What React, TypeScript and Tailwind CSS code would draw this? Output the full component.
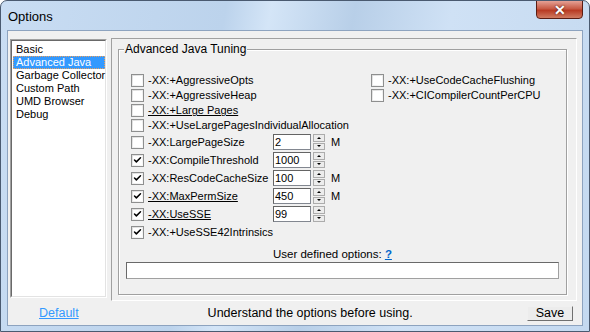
import { Check } from 'lucide-react'

type Opt = {
  label: string
  checked?: boolean
  underline?: boolean
  value?: string
  unit?: string
}

const top: Opt[] = [
  { label: '-XX:+AggressiveOpts' },
  { label: '-XX:+AggressiveHeap' },
  { label: '-XX:+Large Pages', underline: true },
  { label: '-XX:+UseLargePagesIndividualAllocation' },
]

const spin: Opt[] = [
  { label: '-XX:LargePageSize', value: '2', unit: 'M' },
  { label: '-XX:CompileThreshold', value: '1000', checked: true },
  { label: '-XX:ResCodeCacheSize', value: '100', unit: 'M', checked: true },
  { label: '-XX:MaxPermSize', value: '450', unit: 'M', checked: true, underline: true },
  { label: '-XX:UseSSE', value: '99', checked: true, underline: true },
]

const right: Opt[] = [
  { label: '-XX:+UseCodeCacheFlushing' },
  { label: '-XX:+CICompilerCountPerCPU' },
]

const pages = ['Basic', 'Advanced Java', 'Garbage Collector', 'Custom Path', 'UMD Browser', 'Debug']

function Box({ checked }: { checked?: boolean }) {
  return (
    <div className="w-[13px] h-[13px] shrink-0 border border-[#8e8f8f] bg-[linear-gradient(135deg,#dcdcdc,#fbfbfb)] p-[1px]">
      <div className="w-full h-full bg-white flex items-center justify-center">
        {checked && <Check size={10} strokeWidth={4} className="text-black" />}
      </div>
    </div>
  )
}

function Spinner() {
  return (
    <div className="w-[12px] h-[16px] ml-[2px] flex flex-col gap-[1px]">
      <div className="flex-1 border border-[#acacac] bg-[#ececec] flex items-center justify-center">
        <div className="w-0 h-0 border-x-[2px] border-x-transparent border-b-[2px] border-b-black" />
      </div>
      <div className="flex-1 border border-[#acacac] bg-[#ececec] flex items-center justify-center">
        <div className="w-0 h-0 border-x-[2px] border-x-transparent border-t-[2px] border-t-black" />
      </div>
    </div>
  )
}

function Row({ o, h }: { o: Opt; h: string }) {
  return (
    <div className={`flex items-center ${h}`}>
      <Box checked={o.checked} />
      <span className={`ml-[4px] whitespace-nowrap ${o.value ? 'w-[125px]' : ''} ${o.underline ? 'underline' : ''}`}>{o.label}</span>
      {o.value && (
        <>
          <div className="w-[38px] h-[16px] border border-[#828790] border-t-[#646464] border-l-[#646464] bg-white pl-[1px] leading-[14px]">
            {o.value}
          </div>
          <Spinner />
          {o.unit && <span className="ml-[6px]">{o.unit}</span>}
        </>
      )}
    </div>
  )
}

export default function App() {
  return (
    <div className="w-[590px] h-[332px] flex flex-col rounded-t-[7px] border border-[#4a5a70] bg-[linear-gradient(100deg,#c9ddf3_0%,#bcd3ec_35%,#d4e5f7_42%,#b8cfe8_55%,#cfe1f5_70%,#c4d9f0_100%)] font-['Liberation_Sans',sans-serif] text-[11px] text-black overflow-hidden">
      {/* title bar */}
      <div className="h-[29px] flex justify-between pl-[7px] pr-[6px] shrink-0">
        <span className="text-[13px] mt-[6px]">Options</span>
        <div className="w-[47px] h-[19px] -mt-[1px] rounded-b-[4px] border border-[#5a1d14] bg-[linear-gradient(#e5a195,#c75a45_45%,#b83a23_55%,#d07b62)] flex items-center justify-center">
          <span className="text-white font-bold text-[14px] leading-none [text-shadow:0_0_2px_#3a0a00]">✕</span>
        </div>
      </div>

      {/* client */}
      <div className="flex-1 mx-[6px] mb-[7px] border border-[#8da3bf] bg-[#f0f0f0] flex flex-col">
        <div className="flex pt-[8px] pl-[2px] pr-[3px] h-[270px]">
          {/* page list */}
          <div className="w-[97px] h-[259px] border border-[#a0a0a0] border-b-white border-r-white">
            <div className="w-full h-full border border-[#696969] border-b-[#e3e3e3] border-r-[#e3e3e3] bg-white pt-[2px] pl-[1px] text-[11px] whitespace-nowrap">
              {pages.map(p => (
                <div
                  key={p}
                  className={
                    p === 'Advanced Java'
                      ? 'h-[13px] leading-[11px] pl-[2px] bg-[#3399ff] text-white border border-dotted border-[#e8a060]'
                      : 'h-[13px] leading-[13px] pl-[3px]'
                  }
                >
                  {p}
                </div>
              ))}
            </div>
          </div>

          {/* options panel */}
          <div className="ml-[4px] mt-[-1px] w-[466px] h-[263px] border border-[#a0a0a0] border-b-white border-r-white pl-[6px] pr-[9px] pt-[4px]">
            <div className="relative h-[246px] mt-[6px] border border-[#a0a0a0] shadow-[inset_1px_1px_0_#fff,1px_1px_0_#fff]">
              <span className="absolute -top-[8px] left-[5px] bg-[#f0f0f0] px-[1px] text-[12px] leading-[14px]">
                Advanced Java Tuning
              </span>
              <div className="flex pt-[23px] pl-[12px]">
                <div className="w-[240px]">
                  {top.map(o => <Row key={o.label} o={o} h="h-[15px]" />)}
                  {spin.map(o => <Row key={o.label} o={o} h="h-[18px]" />)}
                  <Row o={{ label: '-XX:+UseSSE42Intrinsics', checked: true }} h="h-[18px]" />
                </div>
                <div>
                  {right.map(o => <Row key={o.label} o={o} h="h-[15px]" />)}
                </div>
              </div>
              <div className="pl-[154px] mt-[6px] h-[14px] leading-[14px] text-[11.5px]">
                User defined options: <span className="text-[#0066cc] font-bold underline">?</span>
              </div>
              <div className="mx-[7px] mt-[1px] h-[17px] border border-[#a0a0a0] border-t-[#696969] border-l-[#696969] bg-white" />
            </div>
          </div>
        </div>

        {/* bottom bar */}
        <div className="flex items-center h-[24px] text-[12.5px]">
          <span className="ml-[31px] text-[#3399ff] underline">Default</span>
          <span className="ml-[129px]">Understand the options before using.</span>
          <div className="ml-auto mr-[9px] w-[46px] h-[15px] border border-[#707070] border-t-[#f0f0f0] border-l-[#f0f0f0] bg-[#ececec] flex items-center justify-center leading-none">
            Save
          </div>
        </div>
      </div>
    </div>
  )
}
